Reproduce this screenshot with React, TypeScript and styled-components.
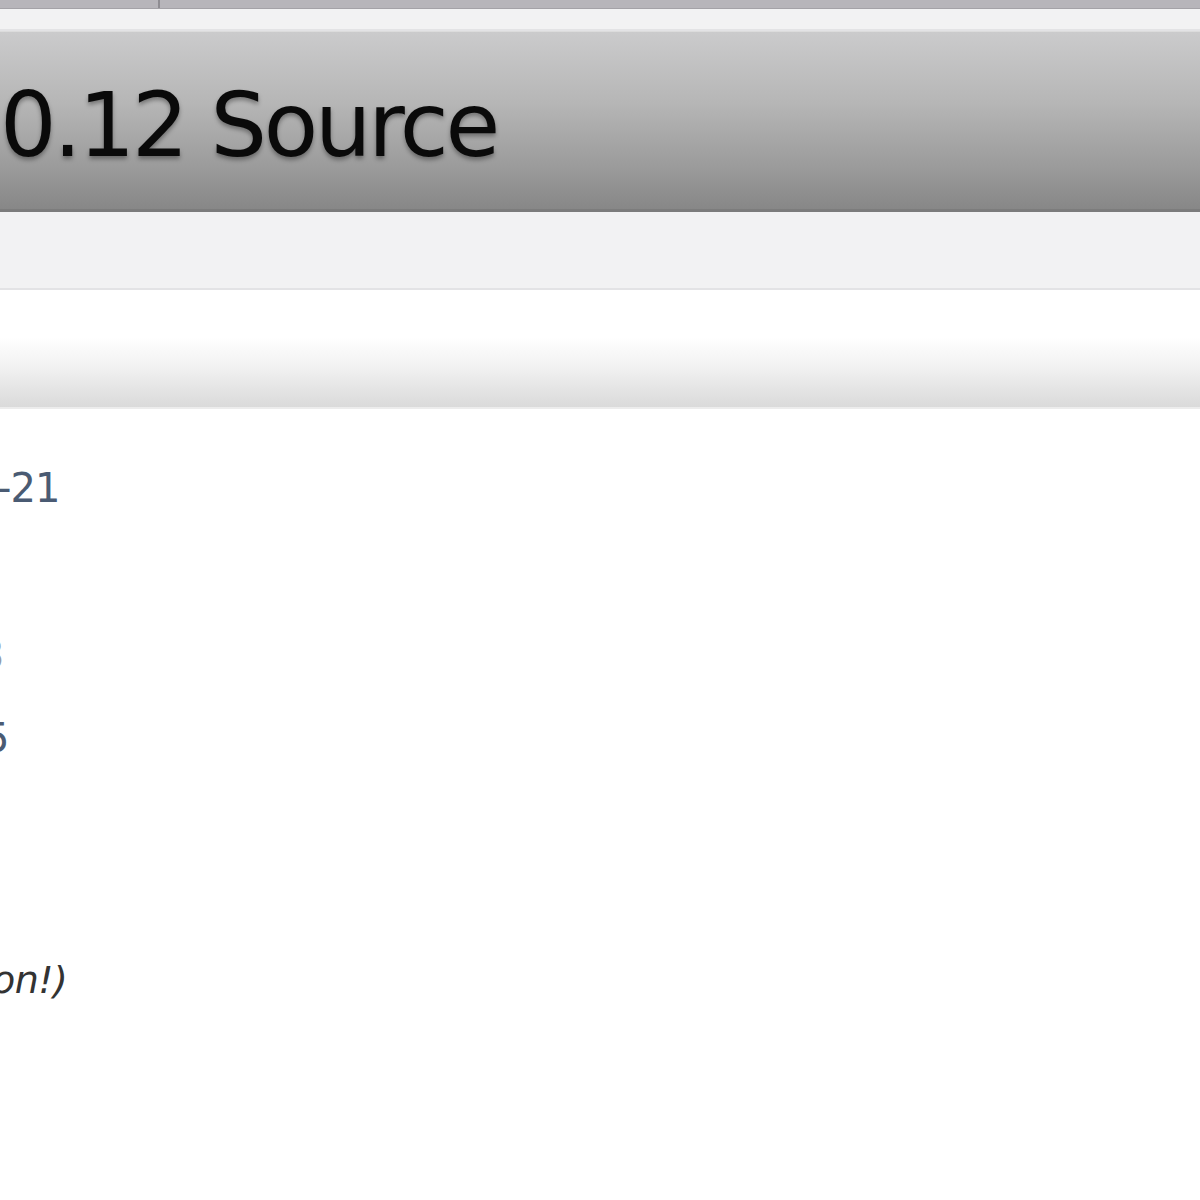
import * as React from 'react';
import styled, { createGlobalStyle } from 'styled-components';

/* ==================== [Style] ==================== */
const Global = createGlobalStyle`
    html, body {
        margin: 0;
        padding: 0;
        background: #ffffff;
        overflow: hidden;
    }
`;

const Page = styled.div`
    display: flex;
    flex-direction: column;
    width: 1200px;
    height: 1200px;
    overflow: hidden;
    background: #ffffff;
`;

const TopBar = styled.div`
    display: flex;
    height: 8px;
    background: #b7b5ba;
    border-bottom: 1px solid #a4a2a7;
`;

const TopTab = styled.div`
    width: 158px;
    border-right: 2px solid #8f8d92;
`;

const Strip = styled.div<{ $h: number }>`
    height: ${p => p.$h}px;
    background: #f2f2f3;
    border-bottom: 2px solid #e3e3e5;
`;

const Header = styled.header`
    display: flex;
    align-items: flex-start;
    height: 136px;
    padding-top: 41px;
    background: linear-gradient(to bottom, #cbcbcc 0%, #b6b6b6 40%, #9c9c9c 75%, #878787 100%);
    border-top: 1px solid #dcdcdc;
    border-bottom: 3px solid #7c7c7c;
`;

const Title = styled.h1`
    margin: 0;
    font-family: "DejaVu Sans", "Liberation Sans", sans-serif;
    font-weight: normal;
    font-size: 89px;
    line-height: normal;
    letter-spacing: -3.2px;
    color: #0a0a0a;
    text-shadow: 0 3px 4px rgba(0, 0, 0, 0.35);
    white-space: nowrap;
`;

const TabBar = styled.div`
    height: 117px;
    background: linear-gradient(to bottom, #ffffff 0%, #ffffff 40%, #f2f2f2 65%, #dadada 100%);
    border-bottom: 2px solid #ececec;
`;

const Content = styled.main`
    display: flex;
    flex-direction: column;
    padding-top: 55px;
`;

const Entry = styled.div<{ $gap: number; $shift: number; $italic?: boolean; $faint?: boolean }>`
    margin-top: ${p => p.$gap}px;
    margin-left: ${p => p.$shift}px;
    height: 48px;
    line-height: 48px;
    white-space: nowrap;
    font-family: "DejaVu Sans", "Liberation Sans", sans-serif;
    font-size: ${p => (p.$italic ? 38 : 40)}px;
    font-style: ${p => (p.$italic ? 'italic' : 'normal')};
    letter-spacing: ${p => (p.$italic ? -0.5 : -1)}px;
    color: ${p => (p.$italic ? '#333333' : '#4a5b73')};
    opacity: ${p => (p.$faint ? 0.6 : 1)};
`;

/* ==================== [Component] ==================== */
const App = () => {
    return (
        <Page>
            <Global />
            <TopBar>
                <TopTab />
            </TopBar>
            <Strip $h={20} />
            <Header>
                <Title>0.12 Source</Title>
            </Header>
            <Strip $h={76} />
            <TabBar />
            <Content>
                <Entry $gap={0} $shift={-3}>-21</Entry>
                <Entry $gap={119} $shift={-21} $faint>3</Entry>
                <Entry $gap={35} $shift={-16}>5</Entry>
                <Entry $gap={194} $shift={-8} $italic>on!)</Entry>
            </Content>
        </Page>
    );
};

export default App;
